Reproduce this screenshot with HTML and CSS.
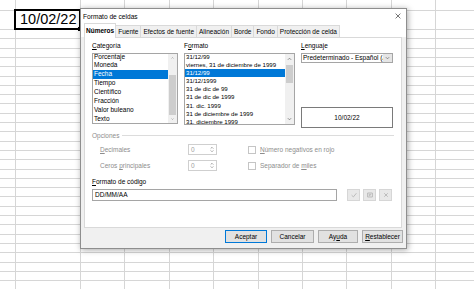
FILE: index.html
```html
<!DOCTYPE html>
<html lang="es">
<head>
  <meta charset="UTF-8">
  <title>Formato de celdas</title>
  <link rel="stylesheet" href="styles.css">
</head>
<body>
  <div class="hoja">
    <div class="celda-activa">10/02/22<span class="tirador"></span></div>

    <!-- Diálogo flotante sobre la hoja -->
    <div class="dialogo">
      <div class="barra-titulo">
        <span>Formato de celdas</span>
        <svg class="cerrar" viewBox="0 0 10 10"><path d="M1 1L9 9M9 1L1 9"/></svg>
      </div>

      <div class="pestanas">
        <span class="pestana activa">Números</span>
        <span class="pestana">Fuente</span>
        <span class="pestana">Efectos de fuente</span>
        <span class="pestana">Alineación</span>
        <span class="pestana">Borde</span>
        <span class="pestana">Fondo</span>
        <span class="pestana">Protección de celda</span>
      </div>

      <div class="panel">
        <div class="rejilla-sup">
          <div>
            <div class="etiqueta"><u>C</u>ategoría</div>
            <div class="lista lista-cat">
              <ul>
                <li>Porcentaje</li>
                <li>Moneda</li>
                <li class="sel">Fecha</li>
                <li>Tiempo</li>
                <li>Científico</li>
                <li>Fracción</li>
                <li>Valor buleano</li>
                <li>Texto</li>
              </ul>
              <div class="scroll">
                <svg class="flecha" viewBox="0 0 6 4"><path d="M1 3L3 1L5 3"/></svg>
                <div class="pista"><span class="cursor cursor-cat"></span></div>
                <svg class="flecha" viewBox="0 0 6 4"><path d="M1 1L3 3L5 1"/></svg>
              </div>
            </div>
          </div>

          <div>
            <div class="etiqueta">F<u>o</u>rmato</div>
            <div class="lista lista-fmt">
              <ul>
                <li>31/12/99</li>
                <li>viernes, 31 de diciembre de 1999</li>
                <li class="sel">31/12/99</li>
                <li>31/12/1999</li>
                <li>31 de dic de 99</li>
                <li>31 de dic de 1999</li>
                <li>31. dic. 1999</li>
                <li>31 de diciembre de 1999</li>
                <li>31. diciembre 1999</li>
              </ul>
              <div class="scroll">
                <svg class="flecha" viewBox="0 0 6 4"><path d="M1 3L3 1L5 3"/></svg>
                <div class="pista"><span class="cursor cursor-fmt"></span></div>
                <svg class="flecha" viewBox="0 0 6 4"><path d="M1 1L3 3L5 1"/></svg>
              </div>
            </div>
          </div>

          <div>
            <div class="etiqueta"><u>L</u>enguaje</div>
            <div class="desplegable">
              <span class="texto-desp">Predeterminado - Español (Argentina)</span>
              <span class="boton-desp">
                <svg class="flecha" viewBox="0 0 6 4"><path d="M1 1L3 3L5 1"/></svg>
              </span>
            </div>
            <div class="vista-previa">10/02/22</div>
          </div>
        </div>

        <div class="grupo-titulo">Opciones</div>

        <div class="opciones">
          <span><u>D</u>ecimales</span>
          <div class="numero">
            <span>0</span>
            <svg class="giro" viewBox="0 0 6 10"><path d="M1.5 4L3 2.5L4.5 4M1.5 6L3 7.5L4.5 6"/></svg>
          </div>
          <label class="casilla"><span class="cuadro"></span><span><u>N</u>úmero negativos en rojo</span></label>

          <span>Ceros <u>p</u>rincipales</span>
          <div class="numero">
            <span>0</span>
            <svg class="giro" viewBox="0 0 6 10"><path d="M1.5 4L3 2.5L4.5 4M1.5 6L3 7.5L4.5 6"/></svg>
          </div>
          <label class="casilla"><span class="cuadro"></span><span>Separador de <u>m</u>iles</span></label>
        </div>

        <div class="etiqueta etiqueta-codigo"><u>F</u>ormato de código</div>
        <div class="fila-codigo">
          <div class="entrada">DD/MM/AA</div>
          <span class="icono">
            <svg viewBox="0 0 10 10"><path d="M2 5.2L4.2 7.4L8 2.8"/></svg>
          </span>
          <span class="icono">
            <svg viewBox="0 0 10 10"><path d="M2 2.5H8V7.5H2Z M3.5 4.2H6.5M3.5 5.8H5.5"/></svg>
          </span>
          <span class="icono">
            <svg viewBox="0 0 10 10"><path d="M2.8 2.8L7.2 7.2M7.2 2.8L2.8 7.2"/></svg>
          </span>
        </div>
      </div>

      <div class="pie">
        <button class="boton b-aceptar">Aceptar</button>
        <button class="boton b-cancelar">Cancelar</button>
        <button class="boton b-ayuda">Ay<u>u</u>da</button>
        <button class="boton b-restablecer"><u>R</u>establecer</button>
      </div>
    </div>
  </div>
</body>
</html>
```

FILE: styles.css
```css
* {
  margin: 0;
  padding: 0;
  box-sizing: border-box;
}

body {
  font-family: 'Liberation Sans', Arial, sans-serif;
  background-color: #fff;
  width: 474px;
  height: 289px;
  overflow: hidden;
}

/* Hoja de cálculo de fondo */
.hoja {
  position: relative;
  width: 474px;
  height: 289px;
  display: grid;
  grid-template-columns: 15px 65px repeat(9, 44.4px);
  grid-template-rows: 10px 18.6px;
  background:
    linear-gradient(90deg, #d6d6d6 1px, transparent 1px) 15px 0 / 1px 100% no-repeat,
    repeating-linear-gradient(90deg, #d6d6d6 0 1px, transparent 1px 44.4px) 80px 0 / 394px 100% no-repeat,
    linear-gradient(#d6d6d6 1px, transparent 1px) 0 10px / 100% 1px no-repeat,
    repeating-linear-gradient(#d6d6d6 0 1px, transparent 1px 9.3px) 0 28.6px / 100% 261px no-repeat;
}

.celda-activa {
  grid-column: 2;
  grid-row: 2;
  margin: -1px;
  border: 2px solid #000;
  font-size: 14.5px;
  line-height: 1;
  display: flex;
  align-items: center;
  padding-left: 4px;
  position: relative;
}

.tirador {
  position: absolute;
  right: -3px;
  bottom: -3px;
  width: 4px;
  height: 4px;
  background-color: #000;
}

/* Ventana de diálogo */
.dialogo {
  position: absolute;
  left: 80px;
  top: 8px;
  width: 327px;
  height: 241px;
  border: 1px solid #8e8e8e;
  background-color: #f0f0f0;
  box-shadow: 1px 1px 6px rgba(0, 0, 0, 0.35);
  display: flex;
  flex-direction: column;
  font-size: 6.5px;
  color: #000;
}

.barra-titulo {
  height: 14px;
  background-color: #fff;
  display: flex;
  align-items: center;
  justify-content: space-between;
  padding: 0 5px 0 2px;
  font-size: 6.6px;
}

.cerrar {
  width: 6px;
  height: 6px;
  stroke: #000;
  stroke-width: 0.9;
  fill: none;
}

.pestanas {
  height: 14px;
  display: flex;
  align-items: flex-end;
  padding-left: 3px;
  position: relative;
  z-index: 1;
  background-color: #fff;
}

.pestana {
  height: 12px;
  line-height: 11px;
  padding: 0 2px;
  border: 1px solid #d9d9d9;
  border-bottom: none;
  margin-left: -1px;
  background-color: #f0f0f0;
  white-space: nowrap;
}

.pestana.activa {
  height: 15px;
  line-height: 13px;
  margin-left: 0;
  margin-bottom: -1px;
  padding: 0 1px;
  background-color: #fff;
  font-weight: bold;
  position: relative;
  z-index: 1;
}

.panel {
  height: 191px;
  margin: 0 4px 0 3px;
  background-color: #fff;
  border: 1px solid #d9d9d9;
  padding: 4px 7px 0 7px;
}

.rejilla-sup {
  display: grid;
  grid-template-columns: 86px 111px 92px;
  column-gap: 6px;
  align-items: start;
}

.etiqueta {
  height: 8px;
  line-height: 8px;
  margin-bottom: 3px;
  white-space: nowrap;
}

.lista {
  display: flex;
  border: 1px solid #a5a5a5;
  background-color: #fff;
  overflow: hidden;
}

.lista ul {
  list-style: none;
  flex: 1;
  overflow: hidden;
}

.lista li {
  padding-left: 1px;
  white-space: nowrap;
}

.lista-cat {
  height: 71px;
}

.lista-cat ul {
  margin-top: -1.5px;
}

.lista-cat li {
  line-height: 8.86px;
}

.lista-fmt {
  height: 72px;
  font-size: 6.1px;
}

.lista-fmt ul {
  margin-top: -1px;
}

.lista-fmt li {
  line-height: 8.1px;
}

.lista li.sel {
  background-color: #0078d7;
  color: #fff;
}

.scroll {
  width: 9px;
  background-color: #f0f0f0;
  display: flex;
  flex-direction: column;
  align-items: center;
}

.flecha {
  width: 5px;
  height: 4px;
  margin: 3px 0;
  stroke: #606060;
  stroke-width: 0.8;
  fill: none;
}

.pista {
  flex: 1;
  width: 100%;
  display: flex;
  justify-content: center;
}

.cursor {
  width: 7px;
  background-color: #cdcdcd;
}

.cursor-cat {
  margin-top: 13px;
  height: 40px;
}

.cursor-fmt {
  margin-top: 1px;
  height: 18px;
}

.desplegable {
  height: 10px;
  border: 1px solid #a5a5a5;
  display: flex;
  background-color: #fff;
}

.texto-desp {
  flex: 1;
  overflow: hidden;
  white-space: nowrap;
  line-height: 8px;
  padding-left: 1px;
}

.boton-desp {
  width: 9px;
  background-color: #e5e5e5;
  display: flex;
  align-items: center;
  justify-content: center;
}

.boton-desp .flecha {
  margin: 0;
}

.vista-previa {
  margin-top: 44px;
  height: 21px;
  border: 1px solid #7a7a7a;
  display: flex;
  align-items: center;
  justify-content: center;
}

.grupo-titulo {
  margin-top: 3.5px;
  line-height: 8px;
  color: #8d8d8d;
  display: flex;
  align-items: center;
  gap: 3px;
}

.grupo-titulo::after {
  content: '';
  flex: 1;
  height: 1px;
  background-color: #dcdcdc;
}

.opciones {
  display: grid;
  grid-template-columns: 88px 29px auto;
  grid-auto-rows: 11px;
  row-gap: 5px;
  padding-left: 8px;
  margin-top: 4.5px;
  align-items: center;
  color: #8d8d8d;
}

.numero {
  height: 11px;
  border: 1px solid #cfcfcf;
  display: flex;
  align-items: center;
  justify-content: space-between;
  padding: 0 1px 0 2px;
  color: #a0a0a0;
}

.giro {
  width: 6px;
  height: 9px;
  stroke: #8a8a8a;
  stroke-width: 0.8;
  fill: none;
}

.casilla {
  display: flex;
  align-items: center;
  gap: 4px;
  margin-left: 31px;
}

.cuadro {
  width: 8px;
  height: 8px;
  border: 1px solid #c5c5c5;
  background-color: #fff;
}

.etiqueta-codigo {
  margin-top: 7px;
  margin-bottom: 3px;
}

.fila-codigo {
  display: flex;
  align-items: center;
  gap: 3px;
}

.entrada {
  width: 245px;
  height: 12px;
  border: 1px solid #a5a5a5;
  line-height: 10px;
  padding-left: 2px;
  margin-right: 7px;
}

.icono {
  width: 13px;
  height: 12px;
  background-color: #e8e8e8;
  border: 1px solid #d6d6d6;
  display: flex;
  align-items: center;
  justify-content: center;
}

.icono svg {
  width: 8px;
  height: 8px;
  stroke: #b5b5b5;
  stroke-width: 1.1;
  fill: none;
}

.pie {
  height: 20px;
  display: flex;
  justify-content: flex-end;
  gap: 4px;
  padding: 2px 3px 0 0;
}

.boton {
  height: 13px;
  border: 1px solid #adadad;
  background-color: #e1e1e1;
  font-family: inherit;
  font-size: 6.5px;
  color: #000;
  display: flex;
  align-items: center;
  justify-content: center;
}

.b-aceptar {
  width: 42px;
  border-color: #0078d7;
}

.b-cancelar {
  width: 43px;
}

.b-ayuda {
  width: 40px;
}

.b-restablecer {
  width: 41px;
}
```
